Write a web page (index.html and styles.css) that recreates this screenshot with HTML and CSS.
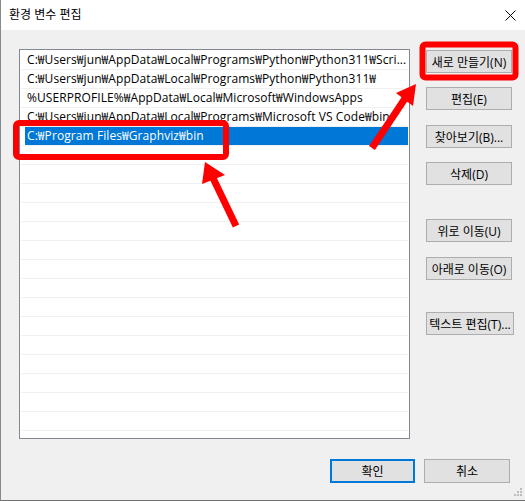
FILE: index.html
```html
<!DOCTYPE html>
<html lang="ko">
<head>
<meta charset="utf-8">
<title>환경 변수 편집</title>
<link rel="stylesheet" href="styles.css">
</head>
<body>
<div class="window">
  <div class="titlebar">
    <span class="title">환경 변수 편집</span>
    <svg class="close" width="11" height="11" viewBox="0 0 11 11"><path d="M0.5 0.5L10.5 10.5M10.5 0.5L0.5 10.5" stroke="#000" stroke-width="1" fill="none"/></svg>
  </div>
  <div class="main">
    <div class="list">
      <div class="row"><div class="cell">C:₩Users₩jun₩AppData₩Local₩Programs₩Python₩Python311₩Scri...</div></div>
      <div class="row"><div class="cell">C:₩Users₩jun₩AppData₩Local₩Programs₩Python₩Python311₩</div></div>
      <div class="row"><div class="cell">%USERPROFILE%₩AppData₩Local₩Microsoft₩WindowsApps</div></div>
      <div class="row"><div class="cell">C:₩Users₩jun₩AppData₩Local₩Programs₩Microsoft VS Code₩bin</div></div>
      <div class="row selected"><div class="cell">C:₩Program Files₩Graphviz₩bin</div></div>
      <div class="row"><div class="cell"></div></div>
      <div class="row"><div class="cell"></div></div>
      <div class="row"><div class="cell"></div></div>
      <div class="row"><div class="cell"></div></div>
      <div class="row"><div class="cell"></div></div>
      <div class="row"><div class="cell"></div></div>
      <div class="row"><div class="cell"></div></div>
      <div class="row"><div class="cell"></div></div>
      <div class="row"><div class="cell"></div></div>
      <div class="row"><div class="cell"></div></div>
      <div class="row"><div class="cell"></div></div>
      <div class="row"><div class="cell"></div></div>
      <div class="row"><div class="cell"></div></div>
      <div class="row"><div class="cell"></div></div>
      <div class="row"><div class="cell"></div></div>
    </div>
    <div class="side">
      <div class="btn">새로 만들기(N)</div>
      <div class="btn gap-s1">편집(E)</div>
      <div class="btn gap-s2">찾아보기(B)...</div>
      <div class="btn gap-s1">삭제(D)</div>
      <div class="btn gap-l1">위로 이동(U)</div>
      <div class="btn gap-s2">아래로 이동(O)</div>
      <div class="btn btn-wide gap-l2">텍스트 편집(T)...</div>
    </div>
  </div>
  <div class="footer">
    <div class="btn btn-default">확인</div>
    <div class="btn">취소</div>
  </div>
</div>
<svg class="grip" width="9" height="9" viewBox="0 0 9 9">
  <rect x="6" y="0" width="2" height="2" fill="#bcbcbc"/>
  <rect x="3" y="3" width="2" height="2" fill="#bcbcbc"/>
  <rect x="6" y="3" width="2" height="2" fill="#bcbcbc"/>
  <rect x="0" y="6" width="2" height="2" fill="#bcbcbc"/>
  <rect x="3" y="6" width="2" height="2" fill="#bcbcbc"/>
  <rect x="6" y="6" width="2" height="2" fill="#bcbcbc"/>
</svg>
<svg class="annot" width="525" height="501" viewBox="0 0 525 501">
  <rect x="16" y="123" width="210" height="34" rx="3" fill="none" stroke="#ff0000" stroke-width="6"/>
  <rect x="422.5" y="44.5" width="93" height="33" rx="3" fill="none" stroke="#ff0000" stroke-width="6"/>
  <line x1="236" y1="226" x2="213" y2="178" stroke="#ff0000" stroke-width="7"/>
  <polygon points="205,162 202,184 225,175" fill="#ff0000"/>
  <line x1="372" y1="148" x2="406" y2="97" stroke="#ff0000" stroke-width="7"/>
  <polygon points="416,84 396,93 413,106" fill="#ff0000"/>
</svg>
</body>
</html>
```

FILE: styles.css
```css
html, body {
  margin: 0;
  padding: 0;
}

body {
  width: 525px;
  height: 501px;
  position: relative;
  overflow: hidden;
  font-family: "Open Sans", "Noto Sans CJK KR", sans-serif;
  font-size: 12px;
  color: #000;
}

.window {
  width: 525px;
  height: 501px;
  box-sizing: border-box;
  border-left: 1px solid #8a8a8a;
  border-bottom: 1px solid #707070;
  background: #f0f0f0;
  display: flex;
  flex-direction: column;
}

.titlebar {
  height: 30px;
  flex: none;
  background: #fff;
  display: flex;
  align-items: center;
  padding-left: 8px;
  padding-right: 9px;
}

.title {
  font-size: 12px;
  line-height: 14px;
}

.close {
  margin-left: auto;
}

.main {
  display: flex;
  gap: 16px;
  padding: 19px 0 0 18px;
}

.list {
  width: 391px;
  height: 390px;
  box-sizing: border-box;
  border: 1px solid #828790;
  background: #fff;
  padding: 1px;
  overflow: hidden;
  flex: none;
}

.row {
  height: 19px;
  box-sizing: border-box;
  border-bottom: 1px solid #f0f0f0;
  padding-left: 4px;
  display: flex;
}

.cell {
  flex: 1;
  padding-left: 2px;
  line-height: 18px;
  letter-spacing: 0.08px;
  white-space: nowrap;
  overflow: hidden;
}

.row.selected .cell {
  background: #0078d7;
  color: #fff;
}

.side {
  display: flex;
  flex-direction: column;
  padding-top: 1px;
}

.btn {
  width: 86px;
  height: 23px;
  box-sizing: border-box;
  border: 1px solid #adadad;
  background: #e1e1e1;
  display: flex;
  align-items: center;
  justify-content: center;
  white-space: nowrap;
  font-size: 12px;
}

.btn-wide {
  width: 88px;
}

.gap-s1 { margin-top: 14px; }
.gap-s2 { margin-top: 15px; }
.gap-l1 { margin-top: 34px; }
.gap-l2 { margin-top: 32px; }

.footer {
  display: flex;
  justify-content: flex-end;
  gap: 9px;
  margin-top: 20px;
  padding-right: 15px;
}

.footer .btn {
  height: 24px;
}

.btn-default {
  width: 85px;
  border: 2px solid #0078d7;
}

.grip {
  position: absolute;
  right: 2px;
  bottom: 4px;
}

.annot {
  position: absolute;
  left: 0;
  top: 0;
  pointer-events: none;
}
```
